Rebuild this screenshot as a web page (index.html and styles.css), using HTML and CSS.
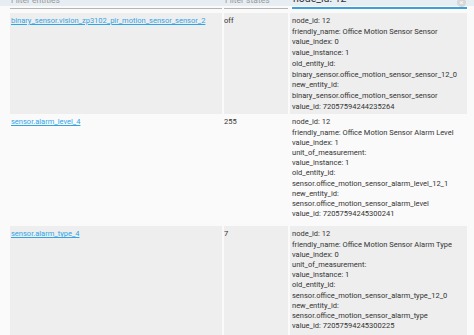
FILE: index.html
```html
<!DOCTYPE html>
<html lang="en">
<head>
    <meta charset="UTF-8">
    <title>States</title>
    <link rel="stylesheet" href="styles.css">
</head>
<body>
    <div class="page">
        <table class="entities">
            <thead>
                <tr>
                    <th class="col-entity"><div class="filter">Filter entities</div></th>
                    <th class="col-state"><div class="filter">Filter states</div></th>
                    <th class="col-attr">
                        <div class="filter filter-active">
                            <span>node_id: 12</span>
                            <span class="clear">×</span>
                        </div>
                    </th>
                </tr>
            </thead>
            <tbody>
                <tr class="odd first">
                    <td><a href="#">binary_sensor.vision_zp3102_pir_motion_sensor_sensor_2</a></td>
                    <td>off</td>
                    <td class="attrs">node_id: 12
friendly_name: Office Motion Sensor Sensor
value_index: 0
value_instance: 1
old_entity_id:
binary_sensor.office_motion_sensor_sensor_12_0
new_entity_id:
binary_sensor.office_motion_sensor_sensor
value_id: 72057594244235264</td>
                </tr>
                <tr class="even">
                    <td><a href="#">sensor.alarm_level_4</a></td>
                    <td>255</td>
                    <td class="attrs">node_id: 12
friendly_name: Office Motion Sensor Alarm Level
value_index: 1
unit_of_measurement:
value_instance: 1
old_entity_id:
sensor.office_motion_sensor_alarm_level_12_1
new_entity_id:
sensor.office_motion_sensor_alarm_level
value_id: 72057594245300241</td>
                </tr>
                <tr class="odd">
                    <td><a href="#">sensor.alarm_type_4</a></td>
                    <td>7</td>
                    <td class="attrs">node_id: 12
friendly_name: Office Motion Sensor Alarm Type
value_index: 0
unit_of_measurement:
value_instance: 1
old_entity_id:
sensor.office_motion_sensor_alarm_type_12_0
new_entity_id:
sensor.office_motion_sensor_alarm_type
value_id: 72057594245300225</td>
                </tr>
            </tbody>
        </table>
    </div>
</body>
</html>
```

FILE: styles.css
```css
html, body {
    margin: 0;
    padding: 0;
    background: #fafafa;
    overflow: hidden;
}
body {
    font-family: Roboto, "Noto Sans", sans-serif;
    color: #333;
    height: 335px;
}
.page {
    padding: 0 5px 0 8px;
    margin-top: -7px;
    background: linear-gradient(#e6edf3 0, #e6edf3 13px, #fafafa 13px);
}
.entities {
    border-collapse: separate;
    border-spacing: 2px 0;
    table-layout: fixed;
    width: 461px;
}
.col-entity { width: 212px; }
.col-state { width: 64px; }
.col-attr { width: 177px; }
th {
    padding: 0 0 4px;
    text-align: left;
    font-weight: normal;
    background: transparent;
}
.filter {
    font-size: 8.5px;
    color: #9a9a9a;
    height: 14px;
    line-height: 12px;
    border-bottom: 1px solid #b5b5b5;
    padding-left: 1px;
}
.col-attr .filter {
    margin-left: 2px;
}
.filter-active {
    display: flex;
    justify-content: space-between;
    align-items: flex-start;
    color: #333;
    font-size: 10.5px;
    line-height: 11px;
    height: 14px;
    padding-left: 1px;
    border-bottom: 2px solid #3fa0d9;
}
.clear {
    width: 9px;
    height: 9px;
    border-radius: 50%;
    background: #d6d6d6;
    color: #fafafa;
    font-size: 8px;
    line-height: 9px;
    text-align: center;
    margin-top: 5px;
    margin-right: 1px;
}
td {
    vertical-align: top;
    font-size: 7.5px;
    line-height: 10.2px;
    padding: 3px 1px 7px;
}
tr.first td {
    line-height: 10.7px;
    padding-bottom: 2px;
}
tr.odd td { background: #eeeeee; }
tr.even td { background: #fafafa; }
td:nth-child(2) { padding-left: 0; }
td.attrs {
    white-space: pre-line;
    padding-left: 2px;
}
a {
    color: #2fa4e7;
    text-decoration: underline;
}
```
